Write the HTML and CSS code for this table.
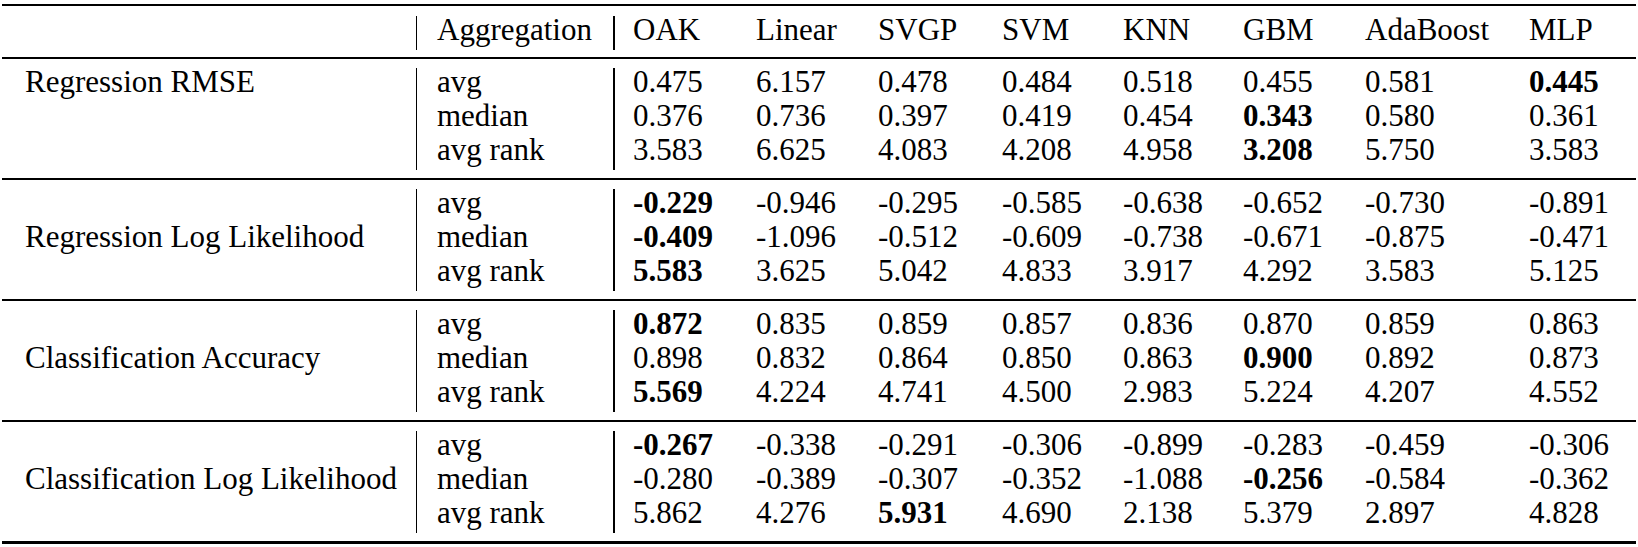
FILE: index.html
```html
<!DOCTYPE html>
<html>
<head>
<meta charset="utf-8">
<link rel="stylesheet" href="styles.css">
</head>
<body>
<div class="table">
  <div class="rule"></div>
  <div class="row head">
    <div class="c label"></div>
    <div class="c agg"><div class="lines">Aggregation</div></div>
    <div class="c oak"><div class="lines">OAK</div></div>
    <div class="c"><div class="lines">Linear</div></div>
    <div class="c"><div class="lines">SVGP</div></div>
    <div class="c"><div class="lines">SVM</div></div>
    <div class="c"><div class="lines">KNN</div></div>
    <div class="c"><div class="lines">GBM</div></div>
    <div class="c"><div class="lines">AdaBoost</div></div>
    <div class="c"><div class="lines">MLP</div></div>
  </div>
  <div class="rule"></div>

  <div class="row group">
    <div class="c label"><div class="lines">Regression RMSE</div></div>
    <div class="c agg"><div class="lines"><div>avg</div><div>median</div><div>avg rank</div></div></div>
    <div class="c oak"><div class="lines"><div>0.475</div><div>0.376</div><div>3.583</div></div></div>
    <div class="c"><div class="lines"><div>6.157</div><div>0.736</div><div>6.625</div></div></div>
    <div class="c"><div class="lines"><div>0.478</div><div>0.397</div><div>4.083</div></div></div>
    <div class="c"><div class="lines"><div>0.484</div><div>0.419</div><div>4.208</div></div></div>
    <div class="c"><div class="lines"><div>0.518</div><div>0.454</div><div>4.958</div></div></div>
    <div class="c"><div class="lines"><div>0.455</div><div class="b">0.343</div><div class="b">3.208</div></div></div>
    <div class="c"><div class="lines"><div>0.581</div><div>0.580</div><div>5.750</div></div></div>
    <div class="c"><div class="lines"><div class="b">0.445</div><div>0.361</div><div>3.583</div></div></div>
  </div>
  <div class="rule"></div>

  <div class="row group">
    <div class="c label mid"><div class="lines">Regression Log Likelihood</div></div>
    <div class="c agg"><div class="lines"><div>avg</div><div>median</div><div>avg rank</div></div></div>
    <div class="c oak"><div class="lines"><div class="b">-0.229</div><div class="b">-0.409</div><div class="b">5.583</div></div></div>
    <div class="c"><div class="lines"><div>-0.946</div><div>-1.096</div><div>3.625</div></div></div>
    <div class="c"><div class="lines"><div>-0.295</div><div>-0.512</div><div>5.042</div></div></div>
    <div class="c"><div class="lines"><div>-0.585</div><div>-0.609</div><div>4.833</div></div></div>
    <div class="c"><div class="lines"><div>-0.638</div><div>-0.738</div><div>3.917</div></div></div>
    <div class="c"><div class="lines"><div>-0.652</div><div>-0.671</div><div>4.292</div></div></div>
    <div class="c"><div class="lines"><div>-0.730</div><div>-0.875</div><div>3.583</div></div></div>
    <div class="c"><div class="lines"><div>-0.891</div><div>-0.471</div><div>5.125</div></div></div>
  </div>
  <div class="rule"></div>

  <div class="row group">
    <div class="c label mid"><div class="lines">Classification Accuracy</div></div>
    <div class="c agg"><div class="lines"><div>avg</div><div>median</div><div>avg rank</div></div></div>
    <div class="c oak"><div class="lines"><div class="b">0.872</div><div>0.898</div><div class="b">5.569</div></div></div>
    <div class="c"><div class="lines"><div>0.835</div><div>0.832</div><div>4.224</div></div></div>
    <div class="c"><div class="lines"><div>0.859</div><div>0.864</div><div>4.741</div></div></div>
    <div class="c"><div class="lines"><div>0.857</div><div>0.850</div><div>4.500</div></div></div>
    <div class="c"><div class="lines"><div>0.836</div><div>0.863</div><div>2.983</div></div></div>
    <div class="c"><div class="lines"><div>0.870</div><div class="b">0.900</div><div>5.224</div></div></div>
    <div class="c"><div class="lines"><div>0.859</div><div>0.892</div><div>4.207</div></div></div>
    <div class="c"><div class="lines"><div>0.863</div><div>0.873</div><div>4.552</div></div></div>
  </div>
  <div class="rule"></div>

  <div class="row group">
    <div class="c label mid"><div class="lines">Classification Log Likelihood</div></div>
    <div class="c agg"><div class="lines"><div>avg</div><div>median</div><div>avg rank</div></div></div>
    <div class="c oak"><div class="lines"><div class="b">-0.267</div><div>-0.280</div><div>5.862</div></div></div>
    <div class="c"><div class="lines"><div>-0.338</div><div>-0.389</div><div>4.276</div></div></div>
    <div class="c"><div class="lines"><div>-0.291</div><div>-0.307</div><div class="b">5.931</div></div></div>
    <div class="c"><div class="lines"><div>-0.306</div><div>-0.352</div><div>4.690</div></div></div>
    <div class="c"><div class="lines"><div>-0.899</div><div>-1.088</div><div>2.138</div></div></div>
    <div class="c"><div class="lines"><div>-0.283</div><div class="b">-0.256</div><div>5.379</div></div></div>
    <div class="c"><div class="lines"><div>-0.459</div><div>-0.584</div><div>2.897</div></div></div>
    <div class="c"><div class="lines"><div>-0.306</div><div>-0.362</div><div>4.828</div></div></div>
  </div>
  <div class="rule bottom"></div>
</div>
</body>
</html>
```

FILE: styles.css
```css
html, body {
  margin: 0;
  padding: 0;
  background: #ffffff;
}

body {
  font-family: "Liberation Serif", Tinos, "Times New Roman", serif;
  font-size: 31px;
  color: #000000;
}

.table {
  width: 1634px;
  margin: 4px 0 0 2px;
  display: flex;
  flex-direction: column;
}

.rule {
  height: 2px;
  background: #000000;
}

.rule.bottom {
  height: 3px;
}

.row {
  display: grid;
  grid-template-columns: 414px 197px 143px 122px 124px 121px 120px 122px 164px 107px;
}

.row.head {
  padding: 10px 0 7px;
}

.row.group {
  padding: 9px 0 8px;
}

.c {
  white-space: nowrap;
}

.label {
  padding-left: 23px;
}

.label.mid {
  display: flex;
  align-items: center;
}

.agg {
  border-left: 1px solid #000000;
  padding-left: 20px;
}

.oak {
  border-left: 2px solid #000000;
  padding-left: 18px;
}

.lines {
  line-height: 34px;
  margin-top: -3px;
  margin-bottom: 3px;
}

.b {
  font-weight: bold;
}
```
